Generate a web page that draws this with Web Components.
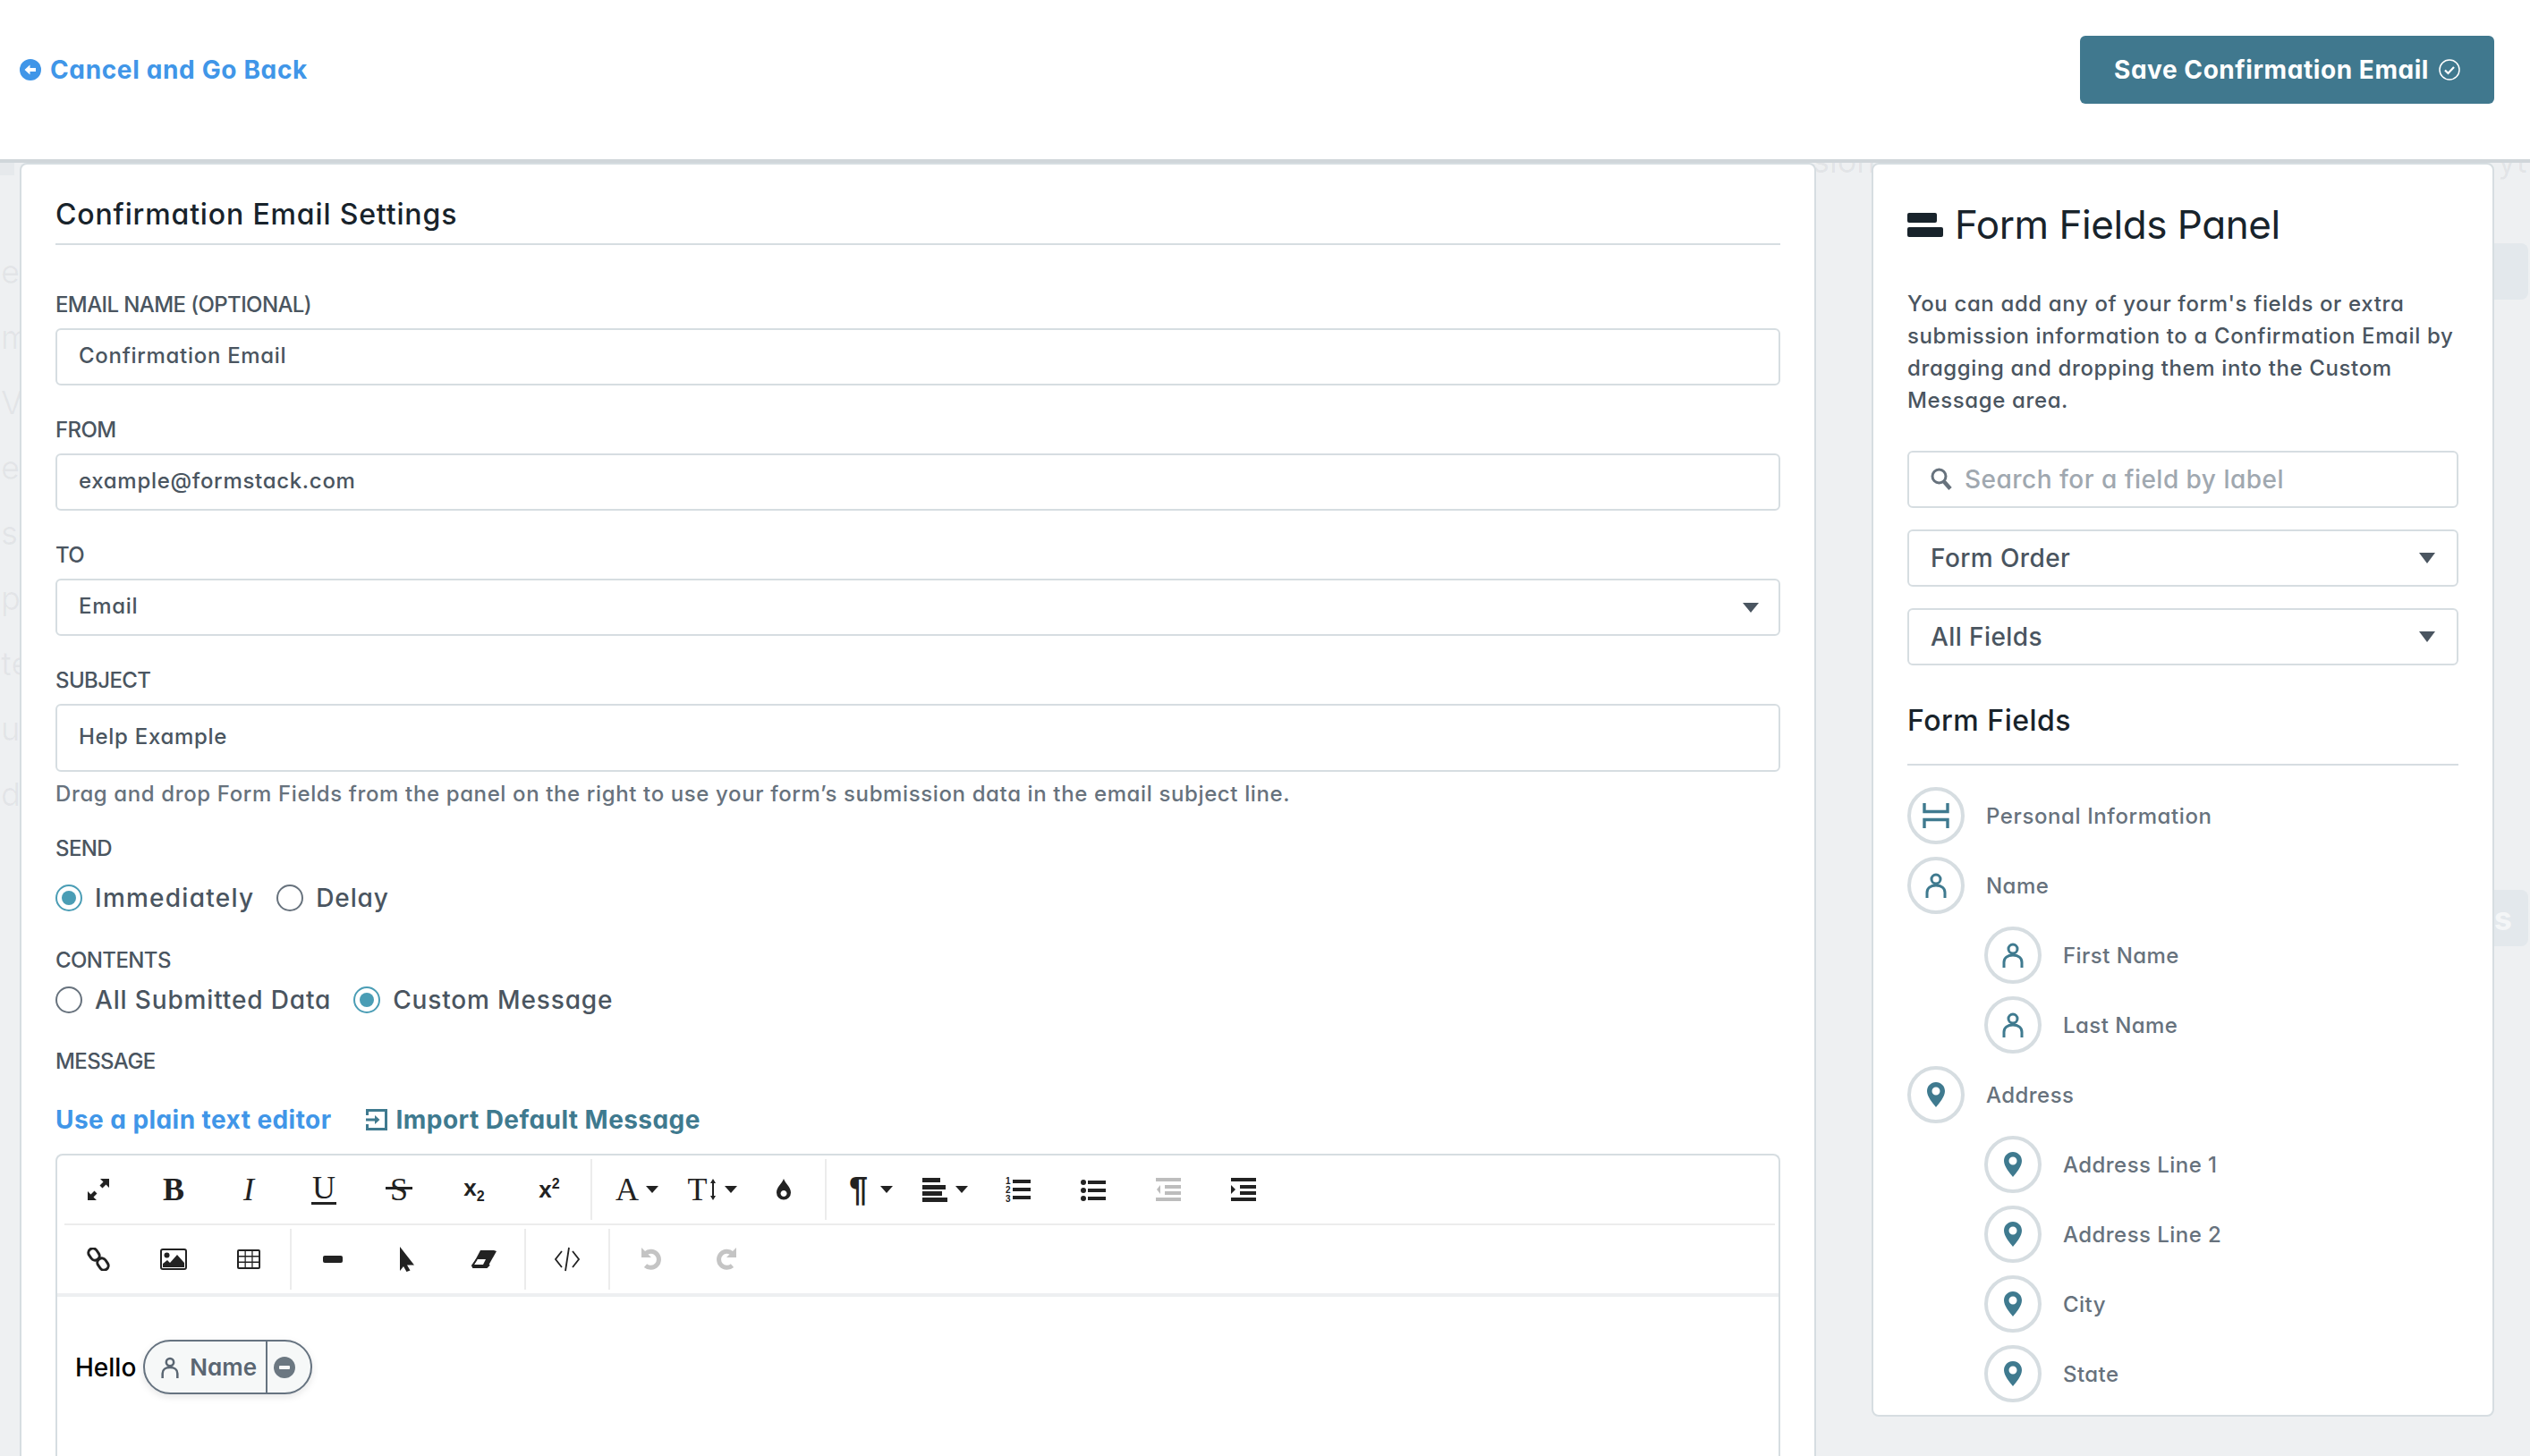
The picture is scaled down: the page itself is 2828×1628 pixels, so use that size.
<!doctype html>
<html lang="en"><head><meta charset="utf-8"><title>Confirmation Email</title>
<style>
html,body{margin:0;height:100%;overflow:hidden;background:#eef0f2}
body{font-family:Inter,"Noto Sans",sans-serif;font-feature-settings:"cv11";color:#4a5560}
</style></head><body>
<template id="ic-person"><svg viewBox="0 0 24 28" width="24" height="28" fill="none" stroke="currentColor" stroke-width="3"><circle cx="12" cy="7" r="5"/><path d="M2 28v-6c0-5 4-8 10-8s10 3 10 8v6" stroke-linecap="round"/></svg></template>
<template id="ic-pin"><svg viewBox="0 0 20 28" width="20" height="28"><path fill="currentColor" fill-rule="evenodd" d="M10 0C4.400 0 0 4.400 0 10c0 6 6 13 10 18 4-5 10-12 10-18C20 4.400 15.600 0 10 0zm0 5.500a4.500 4.500 0 1 1 0 9 4.500 4.500 0 0 1 0-9z"/></svg></template>
<template id="ic-section"><svg viewBox="0 0 30 28" width="30" height="28" fill="none" stroke="currentColor" stroke-width="3.400"><path d="M2 0v9.500h26V0M2 28v-9.500h26V28"/></svg></template>

<app-shell></app-shell>

<script>
const FONT='Inter,"Noto Sans",sans-serif';
function def(name,css,html,extra){
  customElements.define(name,class extends HTMLElement{
    constructor(){super();const r=this.attachShadow({mode:'open'});
      r.innerHTML='<style>'+css+'</style>'+(typeof html==='function'?html(this):html);}
    connectedCallback(){ if(extra) extra(this); }
  });
}
const attr=(e,n,d='')=>e.getAttribute(n)??d;

def('top-bar',`:host{display:flex;flex:none;align-items:center;justify-content:space-between;height:178px;box-sizing:content-box;padding:0 40px 0 22px;background:#fff;border-bottom:4px solid #d0d6da;position:relative;z-index:2}
.in{display:flex;flex:1;align-items:center;justify-content:space-between;height:156px;margin-bottom:22px}
.back{display:flex;align-items:center;gap:10px;color:#4096e8;font-size:28px;font-weight:700;letter-spacing:.65px}
button{all:unset;box-sizing:border-box;display:flex;align-items:center;gap:11px;height:76px;padding:0 38px;border-radius:6px;background:#40788e;color:#fff;font-size:28px;font-weight:700;font-family:inherit;letter-spacing:.56px}`,
`<div class="in"><div class="back"><svg width="24" height="24" viewBox="0 0 24 24"><circle cx="12" cy="12" r="12" fill="#4096e8"/><path d="M5.500 12l6-5.500v3.500h6.500v4h-6.500v3.500z" fill="#fff"/></svg><span>Cancel and Go Back</span></div>
<button><span>Save Confirmation Email</span><svg width="24" height="24" viewBox="0 0 24 24" fill="none" stroke="#fff"><circle cx="12" cy="12" r="11" stroke-width="1.500"/><path d="M7 12.500l3.500 3.500 6.500-7" stroke-width="2.200"/></svg></button></div>`);

def('settings-card',`:host{display:block;box-sizing:border-box;width:2008px;height:1500px;flex:none;padding:0 38px;background:#fff;border:2px solid #d6dde1;border-bottom:0;border-radius:8px 8px 0 0}
h2{margin:0;height:90px;box-sizing:border-box;padding-top:36px;font-size:32px;line-height:40px;font-weight:500;color:#18232b;border-bottom:2px solid #d6dde1;letter-spacing:.85px}`,
`<h2>Confirmation Email Settings</h2><slot></slot>`);

def('form-field',`:host{display:block}
label{display:block;font-size:24px;line-height:34px;font-weight:500;color:#4a5560;margin:0 0 9px;letter-spacing:-.6px}
.box{display:flex;align-items:center;justify-content:space-between;box-sizing:border-box;height:var(--h,64px);padding:0 24px 3px;border:2px solid #d6dde1;border-radius:6px;font-size:24px;font-weight:500;color:#4a5560;background:#fff;letter-spacing:.7px}
i{width:0;height:0;border:9px solid transparent;border-top:11px solid #4a5560;border-bottom:0;margin:3px -2px 0 0}
.help{font-size:24px;line-height:34px;font-weight:500;color:#67727d;margin-top:8px;letter-spacing:.62px}`,
e=>`<label>${attr(e,'label')}</label><div class="box" style="--h:${attr(e,'h','64')}px"><span>${attr(e,'value')}</span>${e.hasAttribute('select')?'<i></i>':''}</div>${e.hasAttribute('help')?`<div class="help">${attr(e,'help')}</div>`:''}`);

def('radio-opt',`:host{display:inline-flex;align-items:center;gap:14px;font-size:28px;line-height:36px;font-weight:500;color:#4a5560;letter-spacing:.85px}
b{display:block;box-sizing:border-box;width:30px;height:30px;border-radius:50%;border:2px solid #67727d;background:#fff;position:relative}
:host([on]) b{border-color:#4a9db5}
:host([on]) b::after{content:"";position:absolute;inset:5px;border-radius:50%;background:#4a9db5}`,
`<b></b><slot></slot>`);

def('radio-group',`:host{display:block}
label{display:block;font-size:24px;line-height:34px;font-weight:500;color:#4a5560;letter-spacing:-.6px}
.r{display:flex;gap:25px;margin-top:var(--g,22px)}`,
e=>`<label>${attr(e,'label')}</label><div class="r" style="--g:${attr(e,'gap','20')}px"><slot></slot></div>`);

def('link-row',`:host{display:flex;align-items:center;gap:38px;font-size:28px;line-height:36px;font-weight:700;letter-spacing:.44px}
.a{color:#4096e8}.b{display:flex;align-items:center;gap:10px;color:#3f7a8f}`,
`<span class="a">Use a plain text editor</span><span class="b"><svg width="24" height="24" viewBox="0 0 24 24" fill="none" stroke="#3f7a8f" stroke-width="3"><path d="M1.500 7V1.500h21v21h-21V17"/><path d="M0 12h13"/><path d="M10 7l5.500 5-5.500 5z" fill="#3f7a8f" stroke="none"/></svg><span>Import Default Message</span></span>`);

def('tool-btn',`:host{display:flex;box-sizing:border-box;align-items:center;justify-content:center;gap:7px;width:84px;height:100%;flex:none;color:#222;font-family:"Liberation Serif",serif;font-size:36px;line-height:1}
:host([off]){color:#bdbdbd}
i{width:0;height:0;border:7.500px solid transparent;border-top:8px solid #222;border-bottom:0;display:none}
:host([caret]) i{display:block}`,
`<slot></slot><i></i>`);

def('tool-sep',`:host{display:block;width:2px;margin:4px 4px;background:#ececec;flex:none}`,``);
def('tool-row',`:host{display:flex;height:76px;padding:0 0 0 4px;flex:none}`,`<slot></slot>`);

def('rich-editor',`:host{display:block;box-sizing:border-box;height:400px;border:2px solid #d6dde1;border-bottom:0;border-radius:8px 8px 0 0;background:#fff;color:#000}
.tb{padding:0 4px 0 0;border-bottom:4px solid #edeff1;height:158px;box-sizing:border-box}
.l{height:2px;background:#ececec;margin:0 0 0 8px}
.body{display:flex;align-items:center;gap:8px;padding:48px 0 0 20px;font-size:28px;font-weight:500;color:#000}`,
`<div class="tb"><slot name="r1"></slot><div class="l"></div><slot name="r2"></slot></div><div class="body"><span>Hello</span><slot name="token"></slot></div>`);

def('field-token',`:host{display:inline-flex;align-items:stretch;box-sizing:border-box;height:61px;border:2px solid #667380;border-radius:31px;background:#f6f8f8;box-shadow:0 3px 8px rgba(0,0,0,.1);color:#5a6672;font-size:26px;font-weight:600}
.n{display:flex;align-items:center;gap:12px;padding:0 10px 0 18px;border-right:2px solid #667380}
.x{display:flex;align-items:center;padding:0 17px 0 7px}`,
`<div class="n"><svg viewBox="0 0 24 28" width="20" height="24" fill="none" stroke="currentColor" stroke-width="3"><circle cx="12" cy="7" r="5"/><path d="M2 28v-6c0-5 4-8 10-8s10 3 10 8v6" stroke-linecap="round"/></svg><span>Name</span></div><div class="x"><svg width="24" height="24" viewBox="0 0 24 24"><circle cx="12" cy="12" r="12" fill="#6b7781"/><rect x="6" y="10" width="12" height="4" rx="1" fill="#f6f8f8"/></svg></div>`);

def('field-item',`:host{display:flex;align-items:center;gap:24px;height:64px;font-size:24px;font-weight:500;color:#67727d;letter-spacing:.45px}
:host([sub]){padding-left:86px}
.c{display:flex;align-items:center;justify-content:center;box-sizing:border-box;width:64px;height:64px;border-radius:50%;border:4px solid #d6dde1;color:#3f7a8f;flex:none}`,
e=>`<div class="c">${document.getElementById('ic-'+attr(e,'icon')).innerHTML}</div><span>${attr(e,'label')}</span>`);

def('panel-select',`:host{display:flex;align-items:center;justify-content:space-between;box-sizing:border-box;height:64px;padding:0 24px;border:2px solid #d6dde1;border-radius:6px;font-size:28px;font-weight:500;color:#4a5560;letter-spacing:.4px}
i{width:0;height:0;border:9px solid transparent;border-top:12px solid #4a5560;border-bottom:0}`,
`<span><slot></slot></span><i></i>`);

def('panel-search',`:host{display:flex;align-items:center;gap:14px;box-sizing:border-box;height:64px;padding:0 24px;border:2px solid #d6dde1;border-radius:6px;font-size:28px;font-weight:500;color:#a0a8b0;letter-spacing:.48px}`,
`<svg width="24" height="26" viewBox="0 0 24 26" fill="none" stroke="#67727d"><circle cx="9.500" cy="9.500" r="7.500" stroke-width="3"/><path d="M15 15.500l7 8" stroke-width="4.500"/></svg><span>Search for a field by label</span>`);

def('fields-panel',`:host{display:block;box-sizing:border-box;width:696px;height:1402px;flex:none;padding:0 38px;background:#fff;border:2px solid #d6dde1;border-radius:8px;overflow:hidden}
.t{display:flex;align-items:center;gap:13px;height:78px;margin-top:28px;font-size:44px;color:#18232b;letter-spacing:-.45px}
.bars{display:flex;flex-direction:column;gap:5px;width:40px}
.bars i{display:block;height:11px;border-radius:2px;background:#18232b}.bars i:first-child{width:33px}
p{margin:32px 0 0;font-size:24px;line-height:36px;font-weight:500;color:#4a5560;letter-spacing:.62px}
.ctl{display:grid;gap:24px;margin-top:38px}
h3{margin:40px 0 0;height:70px;font-size:32px;line-height:44px;font-weight:500;color:#18232b;border-bottom:2px solid #d6dde1;letter-spacing:.5px}
.list{display:grid;gap:14px;margin-top:24px}`,
`<div class="t"><span class="bars"><i></i><i></i></span><span>Form Fields Panel</span></div>
<p>You can add any of your form's fields or extra submission information to a Confirmation Email by dragging and dropping them into the Custom Message area.</p>
<div class="ctl"><panel-search></panel-search><panel-select>Form Order</panel-select><panel-select>All Fields</panel-select></div>
<h3>Form Fields</h3>
<div class="list"><slot></slot></div>`);

const I=(s,w,h,vb)=>`<svg width="${w}" height="${h}" viewBox="${vb||`0 0 ${w} ${h}`}">${s}</svg>`;
const bars=(rows,c)=>rows.map(([x,y,w,h])=>`<rect x="${x}" y="${y}" width="${w}" height="${h}" fill="${c}"/>`).join('');
const K='#222';
const num=(n,y)=>`<text x="0" y="${y}" font-size="10" font-weight="700" font-family="Liberation Sans" fill="${K}">${n}</text>`;
const row1=`<tool-row slot="r1">
<tool-btn>${I(`<path fill="${K}" d="M14 0h10v10l-3.500-3.500-4 4-3-3 4-4zM0 24V14l3.500 3.500 4-4 3 3-4 4 3.500 3.500z"/>`,24,24)}</tool-btn>
<tool-btn><b>B</b></tool-btn><tool-btn><i>I</i></tool-btn>
<tool-btn><span style="border-bottom:3px solid #222;padding:0 1px;line-height:.84">U</span></tool-btn>
<tool-btn><span style="position:relative">S<span style="position:absolute;left:-5px;right:-5px;top:15px;height:3px;background:#222"></span></span></tool-btn>
<tool-btn style="font:700 26px 'Liberation Sans'"><span>x<sub style="font-size:16px">2</sub></span></tool-btn>
<tool-btn style="font:700 26px 'Liberation Sans'"><span>x<sup style="font-size:16px">2</sup></span></tool-btn>
<tool-sep></tool-sep>
<tool-btn caret style="font-size:36px;gap:8px;padding-left:8px">A</tool-btn><tool-btn caret style="font-size:36px;gap:3px;padding-left:8px"><span>T</span>${I(`<path fill="${K}" d="M3 0l3 5H4v14h2l-3 5-3-5h2V5H0z"/>`,6,24)}<span style="width:4px"></span></tool-btn>
<tool-btn>${I(`<path fill="${K}" fill-rule="evenodd" d="M8 0c2 6 8 9 8 15.500a8 8 0 0 1-16 0C0 9 6 6 8 0zM8 13a3.500 3.500 0 1 0 .1 0z"/>`,16,24)}</tool-btn>
<tool-sep></tool-sep>
<tool-btn caret style="font:700 38px 'Liberation Sans';gap:14px;padding-left:7px">¶</tool-btn>
<tool-btn caret style="gap:9px;padding-left:5px">${I(bars([[0,0,20,5],[0,8,26,5],[0,15,22,5],[0,22,28,5]],K),28,27)}</tool-btn>
<tool-btn>${I(bars([[8,4,20,4],[8,13,20,4],[8,22,20,4]],K)+num(1,9)+num(2,19)+num(3,29),28,30)}</tool-btn>
<tool-btn>${I(bars([[8,3,20,4],[8,12,20,4],[8,21,20,4]],K)+`<circle cx="3" cy="5" r="3" fill="${K}"/><circle cx="3" cy="14" r="3" fill="${K}"/><circle cx="3" cy="23" r="3" fill="${K}"/>`,28,27)}</tool-btn>
<tool-btn off>${I(bars([[0,0,28,4],[10,8,18,4],[10,15,18,4],[0,22,28,4]],'#bdbdbd')+`<path d="M5 8v10l-4-5z" fill="#bdbdbd"/>`,28,26)}</tool-btn>
<tool-btn>${I(bars([[0,0,28,4],[10,8,18,4],[10,15,18,4],[0,22,28,4]],K)+`<path d="M0 8v10l5-5z" fill="${K}"/>`,28,26)}</tool-btn>
</tool-row>`;
const UNDO=`<path fill="none" stroke="#c4c4c4" stroke-width="5" d="M5.500 6.500A9 9 0 1 1 5.500 20"/><path fill="#c4c4c4" d="M1 0v11h11z"/>`;
const row2=`<tool-row slot="r2">
<tool-btn>${I(`<g fill="none" stroke="${K}" stroke-width="3"><rect x="-5" y="-7" width="10" height="14" rx="5" transform="translate(8 7.500) rotate(-35)"/><rect x="-5" y="-7" width="10" height="14" rx="5" transform="translate(18 18.500) rotate(-35)"/></g>`,26,26)}</tool-btn>
<tool-btn>${I(`<rect x="1" y="1" width="28" height="22" rx="2" fill="#fff" stroke="${K}" stroke-width="2"/><circle cx="7.500" cy="7.500" r="3" fill="${K}"/><path d="M3 21v-4l5-4 3 3 8-9 8 9v5z" fill="${K}"/>`,30,24)}</tool-btn>
<tool-btn>${I(`<rect width="26" height="22" rx="2" fill="${K}"/>`+bars([[2,2,6.500,5],[9.800,2,6.500,5],[17.600,2,6.500,5],[2,8.500,6.500,5],[9.800,8.500,6.500,5],[17.600,8.500,6.500,5],[2,15,6.500,5],[9.800,15,6.500,5],[17.600,15,6.500,5]],'#fff'),26,22)}</tool-btn>
<tool-sep></tool-sep>
<tool-btn>${I(`<rect width="22" height="8" rx="2" fill="${K}"/>`,22,8)}</tool-btn>
<tool-btn>${I(`<path fill="${K}" d="M0 0v27l4-5 3.500 6 4-1.500L8 20.500h8z"/>`,18,28)}</tool-btn>
<tool-btn>${I(`<path fill="${K}" d="M11 0h15l3 1-8.500 15-1.500 2H3l-1-1z"/><path fill="#fff" d="M7 10h10l-3 6H4z"/><path fill="none" stroke="${K}" stroke-width="2" d="M7 10l-5 7 1 2h15l3-3"/>`,29,20)}</tool-btn>
<tool-sep></tool-sep>
<tool-btn>${I(`<path fill="none" stroke="${K}" stroke-width="1.800" d="M8 5l-7 9 7 9M20 5l7 9-7 9M16 1l-4 26"/>`,28,28)}</tool-btn>
<tool-sep></tool-sep>
<tool-btn off>${I(UNDO,24,26)}</tool-btn>
<tool-btn off>${I(`<g transform="matrix(-1 0 0 1 24 0)">${UNDO}</g>`,24,26)}</tool-btn>
</tool-row>`;

const ghost=['er','m','Ve','ec','se','pp','te','us','dv'];
def('app-shell',`:host{display:flex;flex-direction:column;height:1628px;overflow:hidden;font-family:${FONT};position:relative}
.main{display:flex;align-items:flex-start;gap:62px;padding-left:22px;flex:none;position:relative;z-index:1}
.stack{display:grid;grid-template-columns:100%}
.g{position:absolute;color:rgba(50,60,70,.07);font-size:36px;line-height:36px;white-space:nowrap}
.left{position:absolute;left:1px;top:286px;display:flex;flex-direction:column;gap:37px;font-size:36px;line-height:36px;color:rgba(50,60,70,.06)}
.s{position:absolute;background:#e3e8ec;border-radius:8px;color:#f4f6f7;font-weight:700;font-size:36px;line-height:64px}
.box{position:absolute;left:0;top:182px;width:16px;height:14px;background:#e6e9ec}`,
`<top-bar></top-bar>
<div class="box"></div>
<div class="left">${ghost.map(t=>`<span style="white-space:nowrap">${t}</span>`).join('')}</div>
<div class="g" style="left:2026px;top:162px">sion K</div>
<div class="g" style="left:2792px;top:162px">yt</div>
<div class="s" style="left:2776px;top:272px;width:50px;height:63px"></div>
<div class="s" style="left:2776px;top:995px;width:50px;height:63px;text-align:right;padding-right:18px;box-sizing:border-box">s</div>
<div class="main">
<settings-card>
<div class="stack" style="margin-top:50px;row-gap:33px">
<form-field label="EMAIL NAME (OPTIONAL)" value="Confirmation Email"></form-field>
<form-field label="FROM" value="example@formstack.com"></form-field>
<form-field label="TO" value="Email" select></form-field>
<form-field label="SUBJECT" value="Help Example" h="76" help="Drag and drop Form Fields from the panel on the right to use your form’s submission data in the email subject line."></form-field>
</div>
<radio-group label="SEND" style="margin-top:27px"><radio-opt on style="letter-spacing:1.25px">Immediately</radio-opt><radio-opt>Delay</radio-opt></radio-group>
<radio-group label="CONTENTS" gap="9" style="margin-top:35px"><radio-opt>All Submitted Data</radio-opt><radio-opt on>Custom Message</radio-opt></radio-group>
<radio-group label="MESSAGE" gap="0" style="margin-top:34px"></radio-group>
<link-row style="margin-top:30px"></link-row>
<rich-editor style="margin-top:20px">${row1}${row2}<field-token slot="token"></field-token></rich-editor>
</settings-card>
<fields-panel>
<field-item icon="section" label="Personal Information" style="letter-spacing:.6px"></field-item>
<field-item icon="person" label="Name"></field-item>
<field-item icon="person" sub label="First Name"></field-item>
<field-item icon="person" sub label="Last Name"></field-item>
<field-item icon="pin" label="Address"></field-item>
<field-item icon="pin" sub label="Address Line 1"></field-item>
<field-item icon="pin" sub label="Address Line 2"></field-item>
<field-item icon="pin" sub label="City"></field-item>
<field-item icon="pin" sub label="State"></field-item>
</fields-panel>
</div>`);
</script></body></html>
